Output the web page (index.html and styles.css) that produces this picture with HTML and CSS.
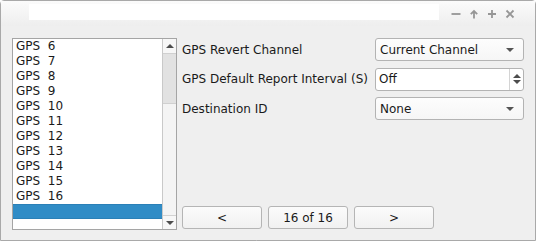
FILE: index.html
```html
<!DOCTYPE html>
<html lang="en">
<head>
  <meta charset="UTF-8">
  <title>GPS Channel</title>
  <link rel="stylesheet" href="styles.css">
</head>
<body>
  <div class="window">
    <!-- title bar -->
    <div class="titlebar">
      <div class="title-mask"></div>
      <div class="win-buttons">
        <svg width="12" height="12" viewBox="0 0 12 12"><path d="M1.5 6h9" stroke="#969696" stroke-width="1.8"/></svg>
        <svg width="12" height="12" viewBox="0 0 12 12"><path d="M6 10.5V3M2.8 6.2L6 3l3.2 3.2" stroke="#969696" stroke-width="1.8" fill="none"/></svg>
        <svg width="12" height="12" viewBox="0 0 12 12"><path d="M2 6h8M6 2v8" stroke="#969696" stroke-width="1.8"/></svg>
        <svg width="12" height="12" viewBox="0 0 12 12"><path d="M2.5 2.5l7 7M9.5 2.5l-7 7" stroke="#969696" stroke-width="1.8"/></svg>
      </div>
    </div>

    <div class="content">
      <!-- channel list -->
      <div class="list">
        <ul class="items">
          <li>GPS  6</li>
          <li>GPS  7</li>
          <li>GPS  8</li>
          <li>GPS  9</li>
          <li>GPS  10</li>
          <li>GPS  11</li>
          <li>GPS  12</li>
          <li>GPS  13</li>
          <li>GPS  14</li>
          <li>GPS  15</li>
          <li>GPS  16</li>
          <li class="selected"></li>
        </ul>
        <div class="scrollbar">
          <div class="sb-btn"><span class="tri-up"></span></div>
          <div class="sb-track"><div class="sb-thumb"></div></div>
          <div class="sb-btn sb-down"><span class="tri-down"></span></div>
        </div>
      </div>

      <div class="panel">
        <div class="form">
          <label>GPS Revert Channel</label>
          <div class="combo">Current Channel<span class="tri-down"></span></div>

          <label>GPS Default Report Interval (S)</label>
          <div class="spin">
            <span class="spin-text">Off</span>
            <span class="spin-arrows"><span class="tri-up"></span><span class="tri-down"></span></span>
          </div>

          <label>Destination ID</label>
          <div class="combo">None<span class="tri-down"></span></div>
        </div>

        <div class="pager">
          <button class="btn">&lt;</button>
          <button class="btn">16 of 16</button>
          <button class="btn">&gt;</button>
        </div>
      </div>
    </div>
  </div>
</body>
</html>
```

FILE: styles.css
```css
* {
  box-sizing: border-box;
  margin: 0;
  padding: 0;
}

body {
  background: #ffffff;
  font-family: "DejaVu Sans", "Liberation Sans", sans-serif;
  font-size: 12px;
  color: #1a1a1a;
}

.window {
  width: 536px;
  height: 241px;
  border: 1px solid #a9a9a9;
  border-radius: 4px 4px 0 0;
  background: #efefef;
  display: flex;
  flex-direction: column;
}

.titlebar {
  height: 25px;
  display: flex;
  align-items: center;
  background: linear-gradient(#fbfbfb, #eeeeee);
  padding-left: 28px;
}

.title-mask {
  width: 410px;
  height: 16px;
  background: #ffffff;
  margin-top: -3px;
}

.win-buttons {
  display: flex;
  gap: 6px;
  margin-left: 11px;
}

.content {
  flex: 1;
  display: flex;
  padding: 12px 11px 0 11px;
}

/* list */
.list {
  width: 165px;
  height: 192px;
  border: 1px solid #a5a5a5;
  background: #ffffff;
  display: flex;
}

.items {
  flex: 1;
  list-style: none;
}

.items li {
  height: 15px;
  line-height: 15px;
  padding-left: 3px;
  white-space: pre;
}

.items li.selected {
  background: #308cc6;
  border-top: 1px solid #2b80b7;
  border-bottom: 1px solid #2b80b7;
}

.scrollbar {
  width: 14px;
  border-left: 1px solid #c9c9c9;
  display: flex;
  flex-direction: column;
  background: #f4f4f4;
}

.sb-btn {
  height: 14px;
  display: flex;
  align-items: center;
  justify-content: center;
  background: #f7f7f7;
}

.sb-down {
  border-top: 1px solid #d2d2d2;
}

.sb-track {
  flex: 1;
}

.sb-thumb {
  height: 51px;
  background: #e2e2e2;
  border-top: 1px solid #d0d0d0;
  border-bottom: 1px solid #d0d0d0;
}

.tri-up,
.tri-down {
  display: block;
  width: 0;
  height: 0;
  border-left: 4px solid transparent;
  border-right: 4px solid transparent;
}

.tri-up {
  border-bottom: 4px solid #4d4d4d;
}

.tri-down {
  border-top: 4px solid #4d4d4d;
}

/* right side */
.panel {
  width: 342px;
  margin-left: 5px;
  height: 192px;
  display: flex;
  flex-direction: column;
  justify-content: space-between;
}

.form {
  display: grid;
  grid-template-columns: 187px 149px;
  column-gap: 6px;
  row-gap: 6.5px;
  align-items: center;
}

.combo,
.spin {
  height: 23px;
  border: 1px solid #b3b3b3;
  border-radius: 3px;
  display: flex;
  align-items: center;
}

.combo {
  background: linear-gradient(#fdfdfd, #f6f6f6);
  padding: 0 9px 0 4px;
  justify-content: space-between;
}

.combo .tri-down {
  border-top-color: #555555;
}

.spin {
  background: #ffffff;
  padding-left: 3px;
}

.spin-text {
  flex: 1;
}

.spin-arrows {
  width: 14px;
  height: 100%;
  border-left: 1px solid #d4d4d4;
  display: flex;
  flex-direction: column;
  align-items: center;
  justify-content: center;
  gap: 2px;
}

.pager {
  display: flex;
  gap: 6px;
  margin-bottom: 1px;
}

.btn {
  width: 80px;
  height: 23px;
  border: 1px solid #b5b5b5;
  border-radius: 3px;
  background: linear-gradient(#fbfbfb, #f1f1f1);
  font-family: inherit;
  font-size: 12px;
  color: #1a1a1a;
}
```
